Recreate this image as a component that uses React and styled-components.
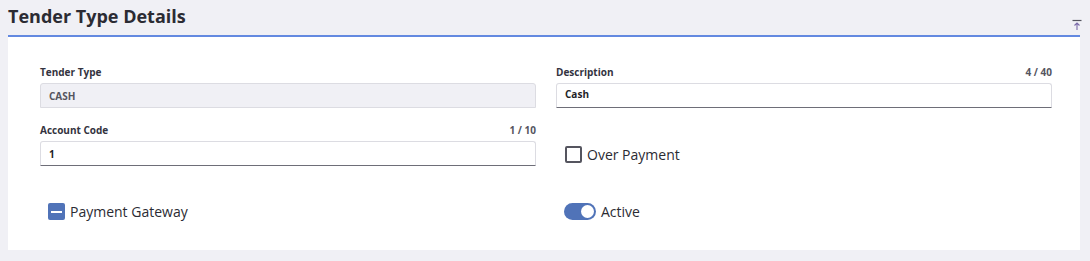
import React from 'react'
import styled, { createGlobalStyle } from 'styled-components'

const Global = createGlobalStyle`
    body {
        margin: 0;
        background: #f0f0f5;
        font-family: "Open Sans", "Noto Sans", sans-serif;
        color: #2b2b33;
    }
`

function TopIcon() {
    return (
        <svg width="12" height="12" viewBox="0 0 12 12">
            <path d="M1.5 1.5h9" stroke="#55555f" strokeWidth="1.2" />
            <path d="M6 11V4M3.5 6.5L6 4l2.5 2.5" stroke="#7a6aa8" strokeWidth="1.1" fill="none" />
        </svg>
    )
}

function Field({ label, counter, value, disabled, multiline }) {
    return (
        <FieldWrap>
            <LabelRow>
                <Label>{label}</Label>
                {counter && <Counter>{counter}</Counter>}
            </LabelRow>
            {multiline
                ? <Area value={value} readOnly rows={1} />
                : <Input disabled={disabled} value={value} readOnly />}
        </FieldWrap>
    )
}

export default function App() {
    return (
        <Page>
            <Global />
            <Header>
                <Title>Tender Type Details</Title>
                <IconButton><TopIcon /></IconButton>
            </Header>
            <Panel>
                <Grid>
                    <Field label="Tender Type" value="CASH" disabled />
                    <Field label="Description" counter="4 / 40" value="Cash" multiline />
                    <Field label="Account Code" counter="1 / 10" value="1" />
                    <CheckCell>
                        <CheckRow $indent={9}>
                            <Box />
                            <CheckText>Over Payment</CheckText>
                        </CheckRow>
                    </CheckCell>
                    <BottomCell>
                        <CheckRow $indent={8}>
                            <Box $checked><Dash /></Box>
                            <CheckText>Payment Gateway</CheckText>
                        </CheckRow>
                    </BottomCell>
                    <BottomCell>
                        <CheckRow $indent={8}>
                            <Toggle><Knob /></Toggle>
                            <CheckText>Active</CheckText>
                        </CheckRow>
                    </BottomCell>
                </Grid>
            </Panel>
        </Page>
    )
}

const Page = styled.div`
    padding: 0 10px 11px 8px;
`
const Header = styled.div`
    height: 35px;
    display: flex;
    align-items: flex-start;
    justify-content: space-between;
    border-bottom: 2px solid #6389e0;
`
const Title = styled.h1`
    margin: 3px 0 0 0;
    font-size: 18px;
    line-height: 26px;
    font-weight: 700;
    color: #2b2b33;
`
const IconButton = styled.div`
    margin: 14px 0 0 0;
    width: 12px;
    height: 12px;
    margin-right: -3px;
`
const Panel = styled.div`
    background: #fff;
    padding: 28px 28px 29px 32px;
`
const Grid = styled.div`
    display: grid;
    grid-template-columns: 496px 496px;
    column-gap: 20px;
    row-gap: 15px;
`
const FieldWrap = styled.div`
    display: flex;
    flex-direction: column;
`
const LabelRow = styled.div`
    display: flex;
    justify-content: space-between;
    align-items: flex-end;
    height: 14px;
    margin-bottom: 4px;
`
const Label = styled.span`
    font-size: 10px;
    font-weight: 700;
    color: #333340;
`
const Counter = styled.span`
    font-size: 10px;
    font-weight: 700;
    color: #55555f;
`
const Input = styled.input`
    box-sizing: border-box;
    height: 25px;
    width: 100%;
    margin: 0;
    padding: 0 8px;
    font-family: "Open Sans", "Noto Sans", sans-serif;
    font-size: 10px;
    font-weight: 700;
    color: ${p => (p.disabled ? '#55555f' : '#1f1f28')};
    background: ${p => (p.disabled ? '#f0f0f5' : '#fff')};
    border: 1px solid #dcdce2;
    border-bottom: 1px solid ${p => (p.disabled ? '#dcdce2' : '#6e6e78')};
    border-radius: 3px 3px 0 0;
    outline: none;
`
const Area = styled.textarea`
    box-sizing: border-box;
    display: block;
    height: 25px;
    width: 100%;
    margin: 0;
    padding: 3px 8px 0 8px;
    resize: none;
    overflow: hidden;
    font-family: "Open Sans", "Noto Sans", sans-serif;
    font-size: 10px;
    line-height: 14px;
    font-weight: 700;
    color: #1f1f28;
    background: #fff;
    border: 1px solid #dcdce2;
    border-bottom: 1px solid #6e6e78;
    border-radius: 3px 3px 0 0;
    outline: none;
`
const CheckCell = styled.div`
    display: flex;
    align-items: flex-end;
    padding-bottom: 2px;
`
const BottomCell = styled.div`
    display: flex;
    align-items: center;
    padding-top: 21px;
`
const CheckRow = styled.div`
    display: flex;
    align-items: center;
    gap: 5px;
    padding-left: ${p => p.$indent}px;
`
const Box = styled.div`
    box-sizing: border-box;
    width: 17px;
    height: 17px;
    border-radius: 2px;
    border: ${p => (p.$checked ? 'none' : '2px solid #55555f')};
    background: ${p => (p.$checked ? '#5073b8' : '#fff')};
    display: flex;
    align-items: center;
    justify-content: center;
`
const Dash = styled.div`
    width: 11px;
    height: 2px;
    background: #fff;
`
const Toggle = styled.div`
    box-sizing: border-box;
    width: 32px;
    height: 17px;
    border-radius: 9px;
    background: #5073b8;
    display: flex;
    align-items: center;
    justify-content: flex-end;
    padding-right: 2px;
`
const Knob = styled.div`
    width: 13px;
    height: 13px;
    border-radius: 50%;
    background: #fff;
`
const CheckText = styled.span`
    font-size: 14px;
    color: #2b2b33;
`
